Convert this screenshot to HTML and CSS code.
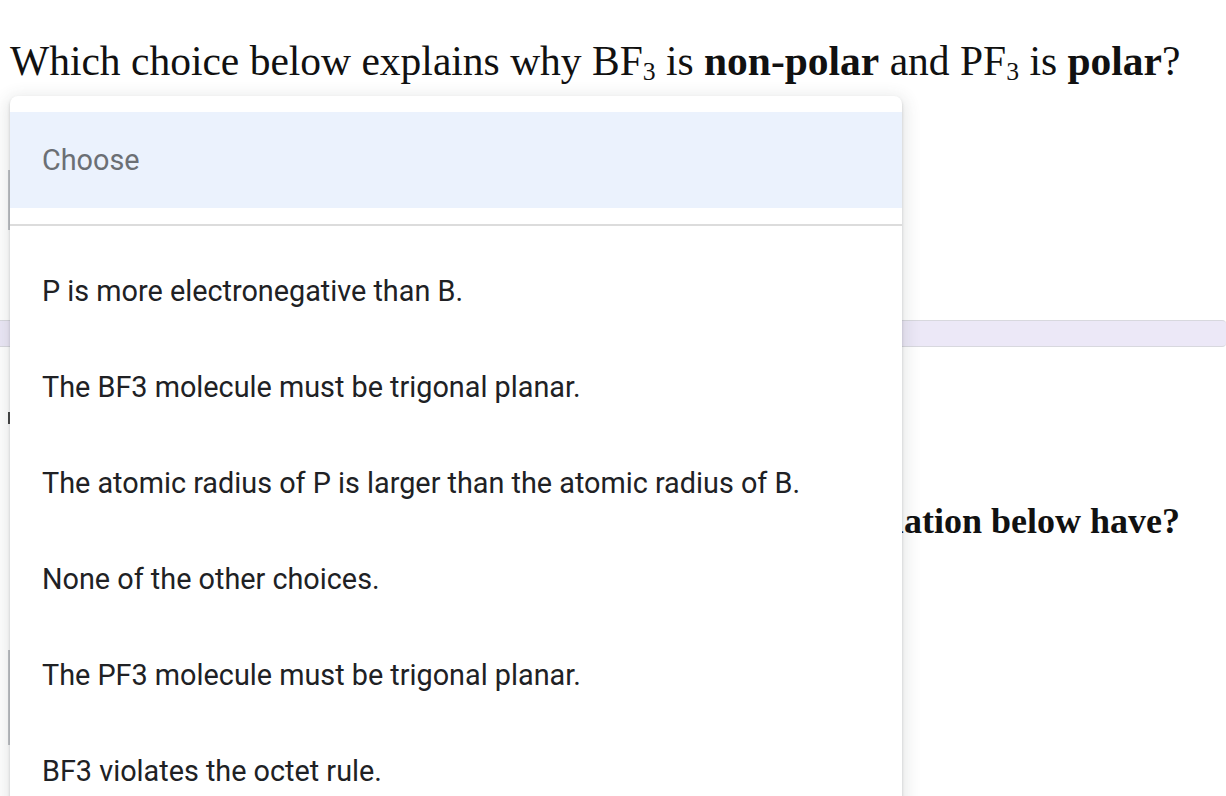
FILE: index.html
```html
<!DOCTYPE html>
<html>
<head>
<meta charset="utf-8">
<link rel="stylesheet" href="styles.css">
</head>
<body>
<div class="page">
  <section class="question">
    <h1 class="q-title">Which choice below explains why BF<sub>3</sub> is <b>non-polar</b> and PF<sub>3</sub> is <b>polar</b>?</h1>
    <div class="select-box top-select"></div>
  </section>
  <div class="band"></div>
  <section class="question second">
    <div class="tick"></div>
    <p class="q-title2">How many lone pairs does the central atom in the equation below have?</p>
    <div class="select-box bottom-select"></div>
  </section>

  <div class="menu">
    <div class="menu-item placeholder">Choose</div>
    <div class="menu-sep"></div>
    <div class="menu-item">P is more electronegative than B.</div>
    <div class="menu-item">The BF3 molecule must be trigonal planar.</div>
    <div class="menu-item">The atomic radius of P is larger than the atomic radius of B.</div>
    <div class="menu-item">None of the other choices.</div>
    <div class="menu-item">The PF3 molecule must be trigonal planar.</div>
    <div class="menu-item">BF3 violates the octet rule.</div>
  </div>
</div>
</body>
</html>
```

FILE: styles.css
```css
html, body {
  margin: 0;
  padding: 0;
  background: #ffffff;
  overflow: hidden;
}
.page {
  position: relative;
  width: 1226px;
  height: 796px;
  overflow: hidden;
}
.question {
  padding: 0 0 0 10px;
}
.q-title {
  margin: 0;
  padding-top: 35px;
  font-family: "Liberation Serif", "Times New Roman", serif;
  font-weight: normal;
  font-size: 41.5px;
  line-height: 52px;
  color: #111;
  white-space: nowrap;
}
.q-title b {
  font-weight: bold;
}
.q-title sub {
  font-size: 0.62em;
  vertical-align: -0.18em;
  line-height: 0;
}
.select-box {
  border-left: 2px solid #c2c4c8;
  margin-left: -2px;
}
.top-select {
  margin-top: 83px;
  height: 60px;
}
.band {
  margin-top: 90px;
  height: 25px;
  background: #ece8f7;
  border-top: 1px solid #d8d8de;
  border-bottom: 1px solid #d8d8de;
  border-radius: 0 4px 4px 0;
}
.second {
  padding-top: 65px;
}
.tick {
  width: 2px;
  height: 12px;
  margin-left: -2px;
  background: #444;
}
.q-title2 {
  margin: 75px 46px 0 0;
  font-family: "Liberation Serif", "Times New Roman", serif;
  font-weight: bold;
  font-size: 36px;
  line-height: 44px;
  color: #111;
  white-space: nowrap;
  text-align: right;
}
.bottom-select {
  margin-top: 107px;
  height: 95px;
}
.menu {
  position: absolute;
  left: 10px;
  top: 96px;
  width: 892px;
  height: 760px;
  background: #ffffff;
  border-radius: 8px;
  box-shadow: 0 2px 3px rgba(60, 64, 67, 0.25), 0 4px 16px 4px rgba(60, 64, 67, 0.12);
  padding-top: 16px;
  box-sizing: border-box;
}
.menu-item {
  height: 96px;
  display: flex;
  align-items: center;
  padding-left: 32px;
  font-family: Roboto, "Liberation Sans", sans-serif;
  font-size: 28.8px;
  color: #202124;
}
.menu-item.placeholder {
  background: #ebf2fd;
  color: #6b6f74;
}
.menu-sep {
  height: 2px;
  margin: 16px 0 17px;
  background: #dcdcdc;
}
```
